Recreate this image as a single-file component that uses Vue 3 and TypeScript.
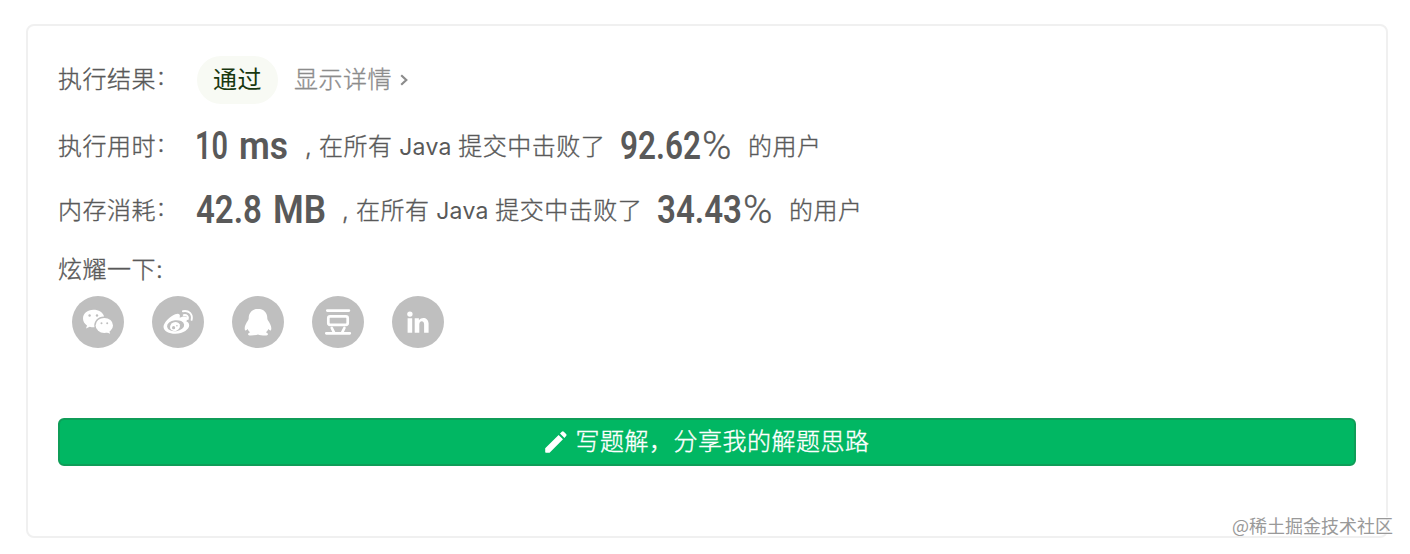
<script setup lang="ts">
interface Part { text: string; x: number; width: number; light?: boolean }
interface Figure { width: number; parts: Part[] }
interface Metric { label: string; value: Figure; rank: Figure; id: string }

const metrics: Metric[] = [
  {
    id: 'time',
    label: '执行用时',
    value: { width: 109, parts: [{ text: '10', x: -1, width: 33 }, { text: 'ms', x: 43, width: 49 }] },
    rank: { width: 129, parts: [{ text: '92.62', x: 0, width: 81 }, { text: '%', x: 82, width: 29.5, light: true }] },
  },
  {
    id: 'memory',
    label: '内存消耗',
    value: { width: 146, parts: [{ text: '42.8', x: 0, width: 66 }, { text: 'MB', x: 77, width: 53 }] },
    rank: { width: 133, parts: [{ text: '34.43', x: 0, width: 85 }, { text: '%', x: 86, width: 29.5, light: true }] },
  },
]
</script>

<template>
  <main class="page">
    <section class="card">
      <div class="row status">
        <span class="label">执行结果<i class="colon">：</i></span>
        <span class="pill">通过</span>
        <a class="detail">显示详情
          <svg width="8" height="12" viewBox="0 0 8 12"><path d="M1.2 1.2 6.300 6 1.200 10.800" fill="none" stroke="currentColor" stroke-width="2.200" /></svg>
        </a>
      </div>
      <div v-for="m in metrics" :key="m.id" class="row" :class="m.id">
        <span class="label">{{ m.label }}<i class="colon">：</i></span>
        <svg class="figure" :width="m.value.width" height="44">
          <text v-for="p in m.value.parts" :key="p.text" :x="p.x" y="35" :textLength="p.width" lengthAdjust="spacingAndGlyphs">{{ p.text }}</text>
        </svg>
        <span class="middle">, 在所有 <span class="latin">Java</span> 提交中击败了</span>
        <svg class="figure" :width="m.rank.width" height="44">
          <text v-for="p in m.rank.parts" :key="p.text" :class="{ light: p.light }" :x="p.x" y="35" :textLength="p.width" lengthAdjust="spacingAndGlyphs">{{ p.text }}</text>
        </svg>
        <span class="tail">的用户</span>
      </div>
      <div class="row share">炫耀一下:</div>
      <div class="socials">
        <span class="social">
          <svg viewBox="0 0 52 52">
            <path fill="#fff" d="M21.4 13.8c-6 0-10.4 3.8-10.4 8.8 0 2.9 1.5 5.3 4 6.9l-1 3 3.7-1.8c1.6.4 3.1.6 4.8.5-1.3-6 4-10.8 9.600-10.600-1.100-4.100-5.400-6.800-10.700-6.800z" />
            <ellipse cx="32.3" cy="29.4" rx="8.700" ry="7.500" fill="#fff" /><path fill="#fff" d="m34 36 4.100 1.700-1-3.800z" />
            <g fill="#bfbfbf"><circle cx="17.600" cy="19.500" r="1.200" /><circle cx="25" cy="19.500" r="1.200" /><circle cx="29.500" cy="27.300" r="1" /><circle cx="35.200" cy="27.300" r="1" /></g>
          </svg>
        </span>
        <span class="social">
          <svg viewBox="0 0 52 52">
            <path fill="#fff" d="M35.400 25.300c-1-.4-.8-.7-.2-2.100.6-1.700-.6-2.700-2.800-2.600-1.600 0-3 .6-4.100.9-.9.2-.7-.3-.5-1.100.6-2.500-1.400-3.500-4.600-2.200-5.200 2-11.700 8.600-11.700 12.500 0 4.600 5.800 7 11.700 7 8.400 0 14-4.700 14-8.500 0-2.300-1.400-3.300-3.800-3.900z" />
            <ellipse cx="23.600" cy="29.700" rx="8.600" ry="5.500" transform="rotate(-7 23.600 29.700)" fill="#bfbfbf" />
            <ellipse cx="23" cy="30.500" rx="5.100" ry="4.300" transform="rotate(-25 23 30.500)" fill="#fff" />
            <circle cx="21.600" cy="31.700" r="1.600" fill="#bfbfbf" /><circle cx="24.900" cy="29.700" r=".8" fill="#bfbfbf" />
            <path d="M30.900 15.200c5.900-1.300 10.100 3 8.700 8.700M31.700 19.100c3-.6 4.900 1.300 4.100 4" fill="none" stroke="#fff" stroke-width="1.900" stroke-linecap="round" />
          </svg>
        </span>
        <span class="social">
          <svg viewBox="0 0 52 52">
            <path fill="#fff" d="M26 12.700c-5.600 0-9.300 4.100-9.300 9.200 0 .9-.2 1.700-.9 2.800-1.900 3-3.900 6.200-2.800 9.500.7.600 1.800-.3 2.800-1.300.3 1.300 1 2.300 2.300 3.300-3.200 1.500-2.500 3.300.8 3.300 2.900 0 5.500-.3 7.100-1.100 1.600.8 4.200 1.100 7.100 1.100 3.300 0 4-1.800.8-3.300 1.300-1 2-2 2.300-3.300 1 1 2.100 1.900 2.800 1.300 1.100-3.300-.9-6.500-2.800-9.500-.7-1.100-.9-1.900-.9-2.800 0-5.100-3.700-9.200-9.300-9.200z" />
          </svg>
        </span>
        <span class="social">
          <svg viewBox="0 0 52 52" fill="none" stroke="#fff" stroke-width="2.700" stroke-linecap="round">
            <path d="M15.300 14.600h21.600M14.300 37.300h23.500M19.800 32l2.400 4.800M32.400 32 30 36.800" /><rect x="16.300" y="20.300" width="19.400" height="8.500" rx="1.800" />
          </svg>
        </span>
        <span class="social">
          <svg viewBox="0 0 52 52" fill="#fff">
            <circle cx="17.900" cy="18.100" r="2.700" /><path d="M15.600 22.200h4.600v14.500h-4.600zM22.700 22.200h4.200v2c2.800-4 9.700-2.800 9.700 3.400v9.100h-4.500v-8.100c0-4.600-4.800-4.100-4.800 0v8.100h-4.600z" />
          </svg>
        </span>
      </div>
      <button class="write">
        <svg width="22" height="22" viewBox="0 0 22 22" fill="#fff"><path d="M.2 17.200 13.600 3.900l4.400 4.400L4.600 21.700H.9q-.7 0-.7-.7zM15 2.500 16.800.7q1-.8 2 0l2.300 2.300q.9 1 0 2l-1.700 1.900z" /></svg>
        <span>写题解，分享我的解题思路</span>
      </button>
    </section>
    <div class="watermark">@稀土掘金技术社区</div>
  </main>
</template>

<style>
body { margin: 0; background: #fff; }
</style>

<style scoped>
.page { position: relative; box-sizing: border-box; height: 554px; padding: 24px 22px 16px 26px; overflow: hidden; font: 300 24px/36px Inter, "Noto Sans CJK SC", sans-serif; letter-spacing: .5px; color: #595959; -webkit-text-stroke: .35px currentColor; }
.card { box-sizing: border-box; height: 514px; border: 2px solid #f0f0f0; border-radius: 8px; padding: 30px; }
.row { display: flex; align-items: center; white-space: nowrap; }
.label { display: flex; width: 138px; flex: none; }
.colon { font-style: normal; font-size: 20px; line-height: 32px; }
.status { height: 48px; }
.pill { box-sizing: border-box; width: 81px; height: 48px; margin-left: 1px; border-radius: 24px; background: #f8faf4; color: #18380f; font-weight: 400; line-height: 48px; text-align: center; -webkit-text-stroke: 0; }
.detail { display: flex; align-items: center; gap: 8px; margin-left: 16px; color: #8c8c8c; }
.time { height: 44px; margin-top: 21px; }
.memory { height: 44px; margin-top: 20px; }
.figure { flex: none; display: block; overflow: visible; position: relative; top: -1px; font: 600 38px Roboto, sans-serif; letter-spacing: 0; fill: #595959; -webkit-text-stroke: 0; }
.light { font-weight: 300; stroke: #595959; stroke-width: .3px; }
.middle { width: 315px; word-spacing: -.5px; }
.latin { font-size: 23px; font-weight: 400; letter-spacing: .2px; -webkit-text-stroke: 0; }
.tail { margin-left: -1px; }
.share { height: 36px; margin-top: 19px; }
.socials { display: flex; gap: 28px; margin: 8px 0 0 14px; }
.social { width: 52px; height: 52px; border-radius: 50%; background: #bfbfbf; }
.social svg { display: block; width: 52px; height: 52px; }
.write { box-sizing: border-box; display: flex; align-items: center; justify-content: center; gap: 9px; width: 100%; height: 48px; margin-top: 70px; padding: 0; border: 2px solid #0f9d58; border-radius: 6px; background: #01b763; color: #fff; font: inherit; letter-spacing: .5px; }
.watermark { position: absolute; right: 17px; top: 512px; font: 400 18px/26px "Noto Sans CJK SC", sans-serif; letter-spacing: 0; color: #999; text-shadow: -1px -1px 1px #fff; -webkit-text-stroke: 0; }
</style>
